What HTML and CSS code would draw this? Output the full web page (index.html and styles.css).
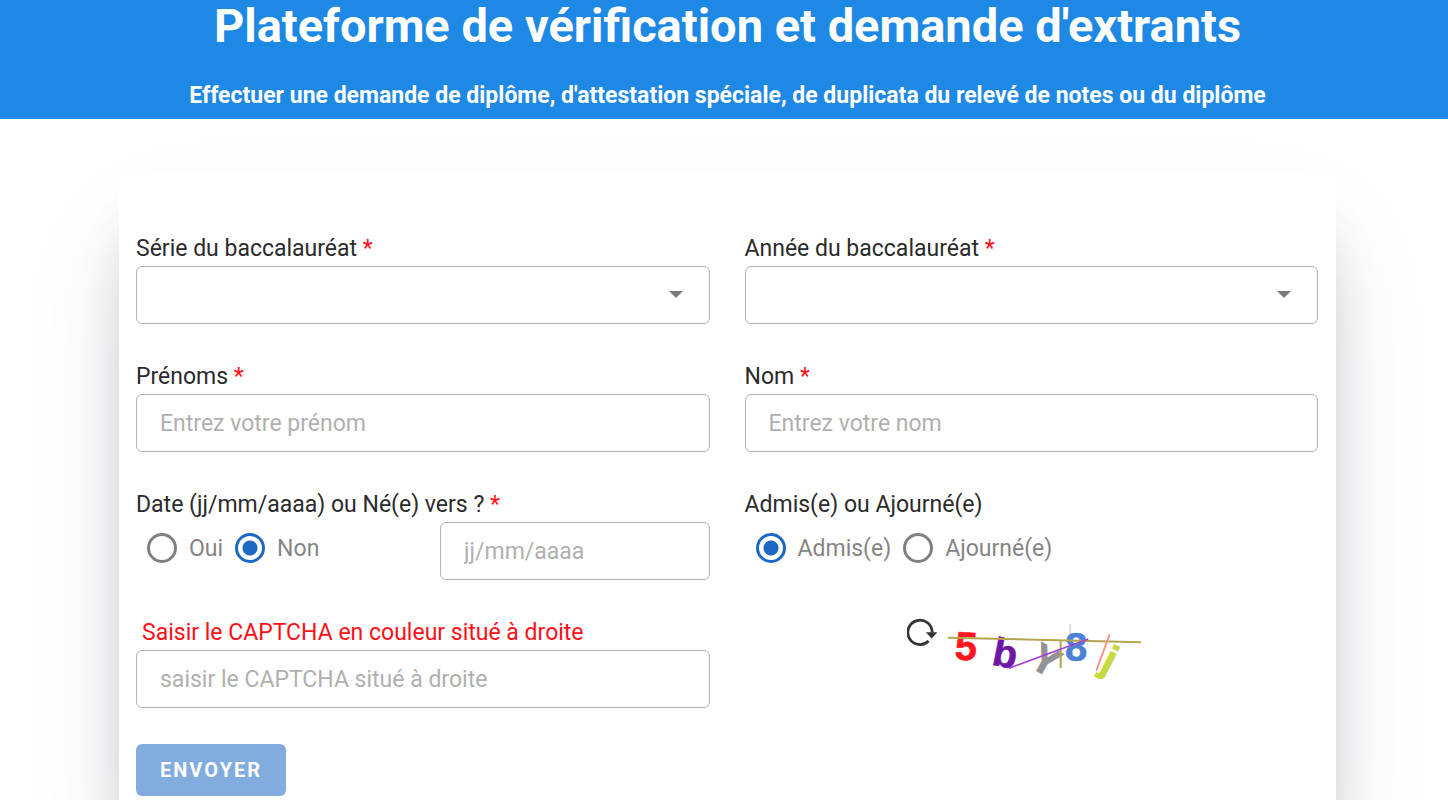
FILE: index.html
```html
<!DOCTYPE html>
<html lang="fr">
<head>
<meta charset="utf-8">
<meta name="viewport" content="width=device-width, initial-scale=1">
<title>Plateforme de vérification et demande d'extrants</title>
<link rel="stylesheet" href="styles.css">
</head>
<body>
<header class="banner">
  <h1 class="banner-title">Plateforme de vérification et demande d'extrants</h1>
  <p class="banner-subtitle">Effectuer une demande de diplôme, d'attestation spéciale, de duplicata du relevé de notes ou du diplôme</p>
</header>
<main class="content">
  <form class="card">
    <div class="field">
      <label class="label" for="serie">Série du baccalauréat <span class="required">*</span></label>
      <div class="select-wrap"><select class="control" id="serie"><option></option></select></div>
    </div>
    <div class="field">
      <label class="label" for="annee">Année du baccalauréat <span class="required">*</span></label>
      <div class="select-wrap"><select class="control" id="annee"><option></option></select></div>
    </div>
    <div class="field">
      <label class="label" for="prenoms">Prénoms <span class="required">*</span></label>
      <input class="control" id="prenoms" type="text" placeholder="Entrez votre prénom">
    </div>
    <div class="field">
      <label class="label" for="nom">Nom <span class="required">*</span></label>
      <input class="control" id="nom" type="text" placeholder="Entrez votre nom">
    </div>
    <div class="field">
      <label class="label" for="naissance">Date (jj/mm/aaaa) ou Né(e) vers ? <span class="required">*</span></label>
      <div class="birth-row">
        <div class="radios">
          <label class="radio-label"><input class="radio" type="radio" name="vers">Oui</label>
          <label class="radio-label"><input class="radio" type="radio" name="vers" checked>Non</label>
        </div>
        <input class="control birth-date" id="naissance" type="text" placeholder="jj/mm/aaaa">
      </div>
    </div>
    <div class="field" role="group" aria-labelledby="resultat">
      <span class="label" id="resultat">Admis(e) ou Ajourné(e)</span>
      <div class="radios">
        <label class="radio-label"><input class="radio" type="radio" name="resultat" checked>Admis(e)</label>
        <label class="radio-label"><input class="radio" type="radio" name="resultat">Ajourné(e)</label>
      </div>
    </div>
    <div class="field">
      <label class="label label-alert" for="captcha">Saisir le CAPTCHA en couleur situé à droite</label>
      <input class="control" id="captcha" type="text" placeholder="saisir le CAPTCHA situé à droite">
    </div>
    <div class="captcha">
      <button class="refresh" type="button" aria-label="Actualiser">
        <svg width="31" height="31" viewBox="0 0 31 31" aria-hidden="true">
          <path d="M21.6 23A12.2 12.2 0 1 1 25.2 14.5" fill="none" stroke="#333" stroke-width="2.8"/>
          <path d="M18.8 14.3H30.4L24.7 20.4Z" fill="#333"/>
        </svg>
      </button>
      <svg class="captcha-image" width="208" height="73" viewBox="0 0 208 73">
        <path d="M123.2 6V22" stroke="#ddd" stroke-width="2"/>
        <text x="19" y="42" fill="#ff1620" stroke="#ff1620" stroke-width=".6" transform="rotate(4 19 29)">5</text>
        <text x="58" y="49" fill="#6f16a6" stroke="#6f16a6" stroke-width=".6" transform="rotate(11 58 37)">b</text>
        <text x="99" y="56" fill="#929297" stroke="#929297" transform="rotate(29 99 42)">Y</text>
        <text x="129" y="43" fill="#4c7fd6" stroke="#4c7fd6" stroke-width=".6">8</text>
        <text x="162" y="55" fill="#c6d93f" stroke="#c6d93f" transform="rotate(27 162 44)">j</text>
        <path d="M1 19.7L194 24.2M113.7 23V50" stroke="#b3a64f" stroke-width="2" fill="none"/>
        <path d="M62 50.3L141.3 21" stroke="#a23fd0" stroke-width="1.6"/>
        <path d="M162.7 16.3L149.3 52.7" stroke="#ff8a80" stroke-width="1.8"/>
      </svg>
    </div>
    <div class="actions"><button class="submit" type="submit">ENVOYER</button></div>
  </form>
</main>
</body>
</html>
```
FILE: styles.css
```css
*, *::before, *::after { box-sizing: border-box; }

html { scrollbar-width: none; }

body {
  margin: 0;
  background: #fff;
  color: #2b2b2b;
  font-family: Roboto, "Liberation Sans", sans-serif;
  font-size: 23px;
}

.banner {
  position: relative;
  z-index: 1;
  padding: 0 0 7px 7px;
  background: #1e88e5;
  color: #fff;
  text-align: center;
}

.banner-title {
  margin: 0 0 28px;
  font-size: 47px;
  line-height: 52px;
  font-weight: 700;
}

.banner-subtitle {
  margin: 0;
  line-height: 32px;
  font-weight: 700;
}

.content { padding: 52px 112px 52px 119px; }

.card {
  display: grid;
  grid-template-columns: 1fr 1fr;
  gap: 36px 35px;
  padding: 61px 18px 42px 17px;
  border-radius: 6px;
  background: #fff;
  box-shadow: 0 56px 100px -28px rgba(50, 50, 93, .25), 0 40px 60px -30px rgba(0, 0, 0, .3);
}

.label {
  display: block;
  line-height: 34px;
}

.required, .label-alert { color: #ff0f17; }

.label-alert { padding-left: 6px; }

.control {
  display: block;
  width: 100%;
  height: 58px;
  padding: 0 23px;
  border: 1px solid #b3b3b3;
  border-radius: 6px;
  background: #fff;
  color: inherit;
  font: inherit;
  appearance: none;
}

.control::placeholder { color: #b0b0b0; opacity: 1; }

.select-wrap { position: relative; }

.select-wrap::after {
  content: "";
  position: absolute;
  top: 25px;
  right: 27px;
  border: solid transparent;
  border-width: 7px 7px 0;
  border-top-color: #7d7d7d;
  pointer-events: none;
}

.birth-row {
  display: flex;
  justify-content: space-between;
}

.birth-date { width: 47%; }

.radios {
  display: flex;
  gap: 12px;
  height: 52px;
  padding-left: 11px;
}

.radio-label {
  display: flex;
  align-items: center;
  gap: 12px;
  color: #858585;
}

.radio {
  width: 30px;
  height: 30px;
  margin: 0;
  border: 3px solid #808080;
  border-radius: 50%;
  appearance: none;
}

.radio:checked {
  border-color: #1b69c5;
  background: radial-gradient(circle, #1b69c5 7px, #fff 8px);
}

.captcha {
  display: flex;
  justify-content: center;
  align-items: flex-start;
  gap: 9px;
  padding-top: 2px;
}

.refresh {
  display: flex;
  padding: 0;
  border: 0;
  background: none;
}

.captcha-image {
  font: 700 40px "Liberation Sans", sans-serif;
  text-anchor: middle;
}

.actions {
  grid-column: 1 / -1;
}

.submit {
  height: 52px;
  padding: 0 24px;
  border: 0;
  border-radius: 6px;
  background: #82acde;
  color: #fff;
  font: 700 20px Roboto, "Liberation Sans", sans-serif;
  letter-spacing: 2px;
}
```
